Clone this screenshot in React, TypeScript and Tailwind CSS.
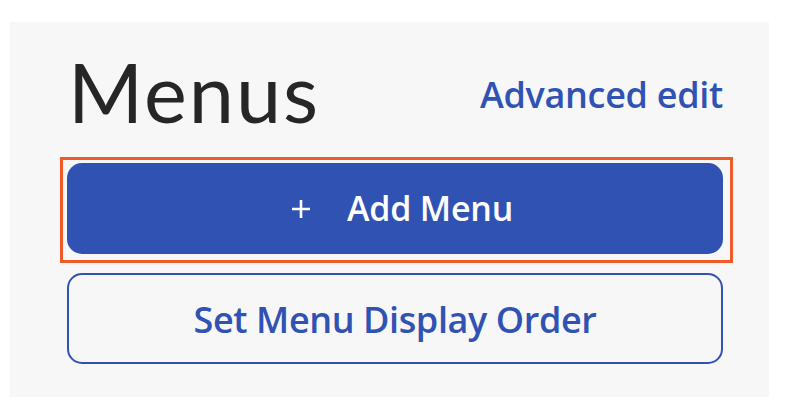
export default function App() {
  return (
    <div className="min-h-screen bg-white pt-[22px] pl-[10px]">
      <div className="w-[759px] h-[375px] bg-[#f7f7f7] pl-[57px] pr-[46px] pt-[29px]">
        {/* header */}
        <div className="flex items-center justify-between">
          <h1 className="font-['Lato',sans-serif] text-[81px] leading-none font-normal text-[#262626] tracking-[2px] pl-[1px]">
            Menus
          </h1>
          <a
            href="#"
            className="font-['Open_Sans',sans-serif] text-[36px] leading-none font-semibold text-[#3052b3] tracking-[-0.3px] mt-[6px]"
          >
            Advanced edit
          </a>
        </div>

        {/* actions */}
        <div className="mt-[31px] flex flex-col gap-[19px]">
          <div className="relative">
            <button className="w-full h-[91px] rounded-[15px] bg-[#3052b3] text-white font-['Open_Sans',sans-serif] text-[34px] font-semibold flex items-center justify-center gap-[36px] pl-[14px]">
              <svg width="20" height="20" viewBox="0 0 20 20" fill="none" stroke="currentColor" strokeWidth="2.6">
                <path d="M10 1v18M1 10h18" />
              </svg>
              <span className="tracking-[-0.2px]">Add Menu</span>
            </button>
            {/* highlight annotation */}
            <div className="pointer-events-none absolute -left-[7px] -top-[6px] -right-[10px] -bottom-[9px] border-[3px] border-[#f05a28]" />
          </div>
          <button className="w-full h-[91px] rounded-[15px] border-2 border-[#3052b3] bg-[#f7f7f7] text-[#3052b3] font-['Open_Sans',sans-serif] text-[36px] font-semibold tracking-[-0.4px] pt-[2px]">
            Set Menu Display Order
          </button>
        </div>
      </div>
    </div>
  );
}
